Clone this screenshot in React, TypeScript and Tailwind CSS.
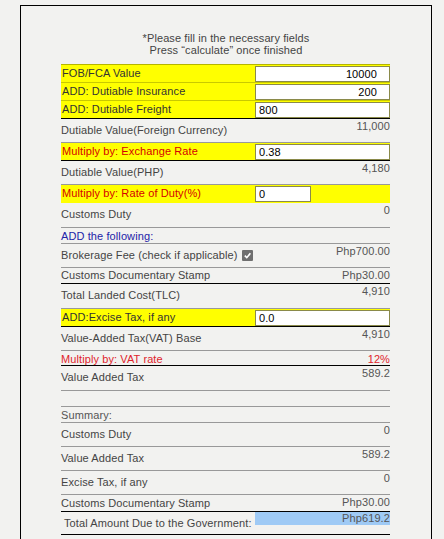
import React from 'react';

const font = { fontFamily: '"Liberation Sans", Arial, sans-serif' };

type RowProps = { label: React.ReactNode; value?: React.ReactNode; h: string; line: string; labelClass?: string };

const Row: React.FC<RowProps> = ({ label, value, h, line, labelClass = 'mt-[5px]' }) => (
  <div className={`flex justify-between items-start ${h} border-b ${line}`}>
    <div className={`${labelClass} text-[#444]`}>{label}</div>
    {value !== undefined && <div className="text-[#555] mt-[1px]">{value}</div>}
  </div>
);

const YellowRow: React.FC<{ label: React.ReactNode; value: string; right?: boolean; short?: boolean; line: string; red?: boolean }> = ({
  label,
  value,
  right,
  short,
  line,
  red,
}) => (
  <div className={`flex items-center h-[18px] bg-[#ffff00] border-b ${line}`}>
    <div className={`w-[194px] pl-[1px] ${red ? 'text-[#d40000]' : 'text-[#333]'}`}>{label}</div>
    <input
      readOnly
      value={value}
      className={`h-[16px] ${short ? 'w-[56px]' : 'w-[135px]'} bg-white border border-[#8a8a4a] px-[3px] text-[11px] tracking-[0.1px] text-black outline-none ${right ? 'text-right pr-[12px]' : ''}`}
      style={font}
    />
  </div>
);

const Check = () => (
  <span className="inline-flex items-center justify-center w-[11px] h-[11px] bg-[#6f6f6f] rounded-[1px] ml-[4px] align-[-1px]">
    <svg width="9" height="9" viewBox="0 0 10 10">
      <path d="M2 5.2 L4.2 7.4 L8.2 2.6" stroke="white" strokeWidth="1.8" fill="none" />
    </svg>
  </span>
);

export default function App() {
  return (
    <div className="min-h-[539px] bg-[#f2f2f0] pt-[5px] overflow-hidden" style={font}>
      <div className="ml-[20px] w-[412px] h-[560px] border border-black border-b-0 text-[11px] tracking-[0.1px] leading-[13px]">
        <div className="pt-[26px] text-center text-[#444] leading-[12px]">
          <div>*Please fill in the necessary fields</div>
          <div>Press “calculate” once finished</div>
        </div>
        <div className="ml-[40px] w-[329px] mt-[8px]">
          <div className="border-t border-[#b5b500]">
            <YellowRow label="FOB/FCA Value" value="10000" right line="border-[#c9c900]" />
            <YellowRow label="ADD: Dutiable Insurance" value="200" right line="border-[#c9c900]" />
            <YellowRow label="ADD: Dutiable Freight" value="800" line="border-black" />
          </div>
          <Row label="Dutiable Value(Foreign Currency)" value="11,000" h="h-[24px]" line="border-[#999]" />
          <YellowRow label="Multiply by: Exchange Rate" value="0.38" red line="border-black" />
          <Row label="Dutiable Value(PHP)" value="4,180" h="h-[24px]" line="border-[#999]" />
          <YellowRow label="Multiply by: Rate of Duty(%)" value="0" short red line="border-[#ffff00]" />
          <Row label="Customs Duty" value="0" h="h-[25px]" line="border-[#999]" />
          <div className="h-[16px] border-b border-[#999] text-[#2323a8] pt-[2px]">ADD the following:</div>
          <Row label={<>Brokerage Fee (check if applicable)<Check /></>} value="Php700.00" h="h-[24px]" line="border-[#999]" />
          <Row label="Customs Documentary Stamp" value="Php30.00" h="h-[16px]" line="border-black" labelClass="mt-[1px]" />
          <Row label="Total Landed Cost(TLC)" value="4,910" h="h-[25px]" line="border-[#999]" />
          <YellowRow label="ADD:Excise Tax, if any" value="0.0" line="border-black" />
          <Row label="Value-Added Tax(VAT) Base" value="4,910" h="h-[24px]" line="border-[#999]" />
          <div className="flex justify-between h-[15px] border-b border-black text-[#e0242c] pt-[2px]">
            <div>Multiply by: VAT rate</div>
            <div>12%</div>
          </div>
          <Row label="Value Added Tax" value="589.2" h="h-[25px]" line="border-[#999]" />
          <div className="h-[16px] border-b border-[#999]" />
          <div className="h-[16px] border-b border-[#999] text-[#555] pt-[2px]">Summary:</div>
          <Row label="Customs Duty" value="0" h="h-[24px]" line="border-[#999]" />
          <Row label="Value Added Tax" value="589.2" h="h-[24px]" line="border-[#999]" />
          <Row label="Excise Tax, if any" value="0" h="h-[24px]" line="border-[#999]" />
          <Row label="Customs Documentary Stamp" value="Php30.00" h="h-[17px]" line="border-black" labelClass="mt-[2px]" />
          <div className="flex items-start h-[23px] border-b border-black">
            <div className="w-[194px] pl-[3px] mt-[5px] text-[#444] whitespace-nowrap">Total Amount Due to the Government:</div>
            <div className="w-[135px] h-[13px] bg-[#9fcaf5] text-right text-[#555] leading-[12px]">Php619.2</div>
          </div>
        </div>
      </div>
    </div>
  );
}
